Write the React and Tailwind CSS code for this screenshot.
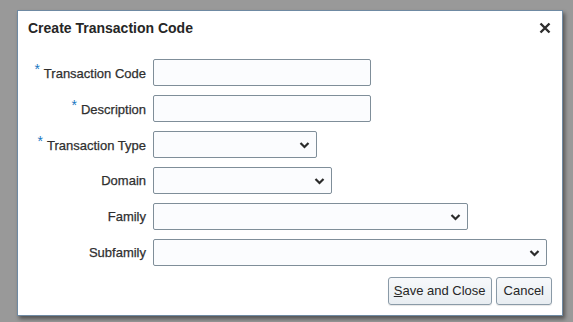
import React from "react";

const font = { fontFamily: '"Liberation Sans", Arial, sans-serif' };

function Chevron() {
  return (
    <svg width="11" height="8" viewBox="0 0 11 8" className="absolute right-[6px] top-1/2 -translate-y-1/2">
      <path d="M1.5 2 L5.5 6 L9.5 2" fill="none" stroke="#2b2b2b" strokeWidth="2.2" />
    </svg>
  );
}

function Field({ label, required, width, select }) {
  return (
    <div className="flex items-center h-[27px]">
      <div className="w-[135px] text-right text-[13px] text-[#2f2f2f] pr-[7px] leading-none whitespace-nowrap [-webkit-text-stroke:0.25px_#2f2f2f]">
        {required && <span className="text-[#1a78c2] text-[14px] relative top-[-4px] mr-[4px] [-webkit-text-stroke:0]">*</span>}
        {label}
      </div>
      <div
        className="relative h-[27px] rounded-[2px] border border-[#7f8e99] bg-[#fbfcfe]"
        style={{ width }}
      >
        {select && <Chevron />}
      </div>
    </div>
  );
}

export default function App() {
  return (
    <div className="w-[573px] h-[322px] bg-[#999999] pt-[10px] pl-[17px] overflow-hidden" style={font}>
      <div className="w-[546px] h-[306px] bg-white border border-[#6f8aa3] shadow-[2px_3px_4px_rgba(0,0,0,0.45)] flex flex-col">
        <div className="flex items-center justify-between pl-[10px] pr-[11px] pt-[4px] h-[30px]">
          <div className="text-[14px] font-bold text-[#262626]">Create Transaction Code</div>
          <svg width="12" height="12" viewBox="0 0 12 12">
            <path d="M1.5 1.5 L10.5 10.5 M10.5 1.5 L1.5 10.5" stroke="#2e2e2e" strokeWidth="2.4" />
          </svg>
        </div>
        <div className="flex flex-col gap-[9px] mt-[18px]">
          <Field label="Transaction Code" required width={218} />
          <Field label="Description" required width={218} />
          <Field label="Transaction Type" required width={164} select />
          <Field label="Domain" width={179} select />
          <Field label="Family" width={315} select />
          <Field label="Subfamily" width={394} select />
        </div>
        <div className="flex justify-end gap-[4px] pr-[10px] mt-[11px]">
          <button className="h-[28px] px-[5px] rounded-[3px] border border-[#8a9aa7] bg-gradient-to-b from-[#f7f9fb] to-[#e8edf1] text-[13px] text-[#262626] shadow-[0_1px_1px_rgba(0,0,0,0.1)]">
            <span className="underline">S</span>ave and Close
          </button>
          <button className="h-[28px] px-[7px] rounded-[3px] border border-[#8a9aa7] bg-gradient-to-b from-[#f7f9fb] to-[#e8edf1] text-[13px] text-[#262626] shadow-[0_1px_1px_rgba(0,0,0,0.1)]">
            Cancel
          </button>
        </div>
      </div>
    </div>
  );
}
